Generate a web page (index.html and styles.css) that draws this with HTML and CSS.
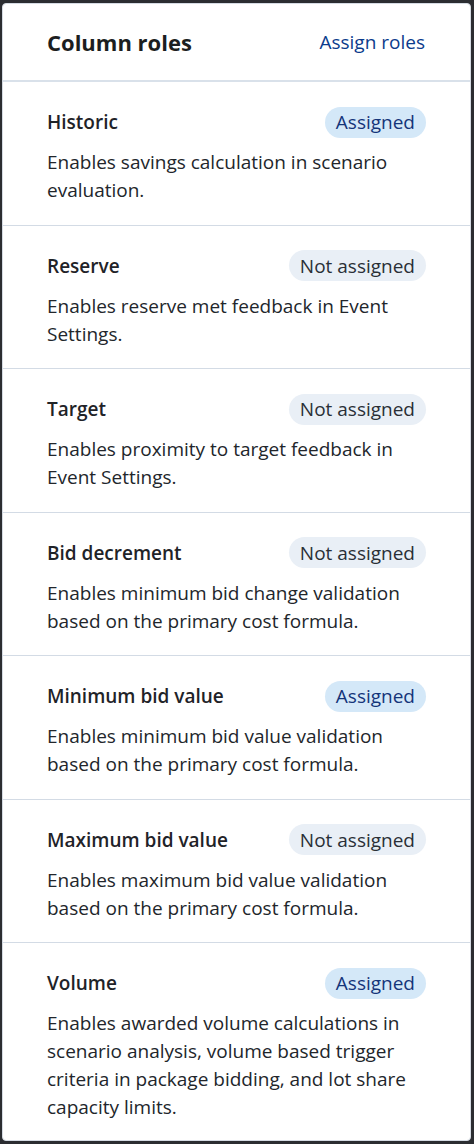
FILE: index.html
```html
<!DOCTYPE html>
<html lang="en">
<head>
<meta charset="utf-8">
<title>Column roles</title>
<link rel="stylesheet" href="styles.css">
</head>
<body>
<div class="frame">
  <section class="card">
    <header class="card-header">
      <h2 class="card-title">Column roles</h2>
      <a class="link" href="#">Assign roles</a>
    </header>
    <ul class="roles">
      <li class="role">
        <div class="role-head"><span class="role-name">Historic</span><span class="badge badge-on">Assigned</span></div>
        <p class="role-desc">Enables savings calculation in scenario evaluation.</p>
      </li>
      <li class="role">
        <div class="role-head"><span class="role-name">Reserve</span><span class="badge badge-off">Not assigned</span></div>
        <p class="role-desc">Enables reserve met feedback in Event Settings.</p>
      </li>
      <li class="role">
        <div class="role-head"><span class="role-name">Target</span><span class="badge badge-off">Not assigned</span></div>
        <p class="role-desc">Enables proximity to target feedback in Event Settings.</p>
      </li>
      <li class="role">
        <div class="role-head"><span class="role-name">Bid decrement</span><span class="badge badge-off">Not assigned</span></div>
        <p class="role-desc">Enables minimum bid change validation based on the primary cost formula.</p>
      </li>
      <li class="role">
        <div class="role-head"><span class="role-name">Minimum bid value</span><span class="badge badge-on">Assigned</span></div>
        <p class="role-desc">Enables minimum bid value validation based on the primary cost formula.</p>
      </li>
      <li class="role">
        <div class="role-head"><span class="role-name">Maximum bid value</span><span class="badge badge-off">Not assigned</span></div>
        <p class="role-desc">Enables maximum bid value validation based on the primary cost formula.</p>
      </li>
      <li class="role">
        <div class="role-head"><span class="role-name">Volume</span><span class="badge badge-on">Assigned</span></div>
        <p class="role-desc">Enables awarded volume calculations in scenario analysis, volume based trigger criteria in package bidding, and lot share capacity limits.</p>
      </li>
    </ul>
  </section>
</div>
</body>
</html>
```

FILE: styles.css
```css
* { box-sizing: border-box; }
html, body { margin: 0; padding: 0; }
body {
  background: #2b2d31;
  font-family: "Open Sans", "Noto Sans", sans-serif;
  color: #1f2328;
}
.frame {
  width: 474px;
  height: 1144px;
  padding: 3px 3px 3px 2px;
}
.card {
  height: 100%;
  background: #ffffff;
  border: 1px solid #d5dbe3;
  border-radius: 4px;
  overflow: hidden;
}
.card-header {
  display: flex;
  align-items: center;
  justify-content: space-between;
  height: 78px;
  padding: 0 45px 0 44px;
  border-bottom: 2px solid #d9e1ea;
}
.card-title {
  margin: 0;
  font-size: 22px;
  font-weight: 700;
  color: #1c1e21;
}
.link {
  font-size: 19px;
  color: #0b3b8c;
  text-decoration: none;
}
.roles {
  list-style: none;
  margin: 0;
  padding: 0;
}
.role {
  height: 143.5px;
  padding: 24px 44px 0 44px;
  border-bottom: 1px solid #d3dbe5;
}
.role:last-child { border-bottom: none; height: auto; }
.role-head {
  display: flex;
  align-items: center;
  justify-content: space-between;
  height: 32px;
}
.role-name {
  font-size: 19px;
  font-weight: 600;
  color: #1f2328;
}
.badge {
  display: inline-flex;
  align-items: center;
  height: 31px;
  padding: 0 11px;
  border-radius: 16px;
  font-size: 19px;
}
.badge-on {
  background: #d4e8f8;
  color: #14357a;
}
.badge-off {
  background: #e9eff6;
  color: #2a2f36;
}
.role-desc {
  margin: 10px 0 0;
  font-size: 19px;
  line-height: 28px;
  color: #22262b;
}
```
